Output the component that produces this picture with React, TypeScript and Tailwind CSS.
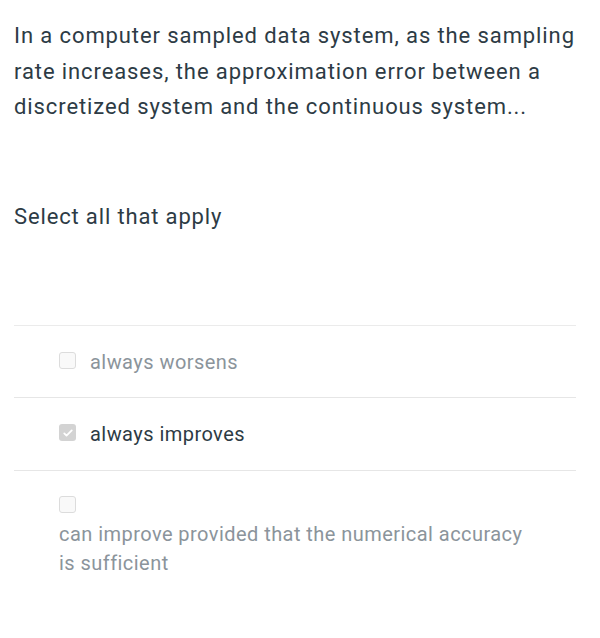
import React from 'react';

type Option = {
  id: string;
  label: string;
  checked: boolean;
  stacked?: boolean;
  rowClass: string;
};

const options: Option[] = [
  { id: 'opt-1', label: 'always worsens', checked: false, rowClass: 'h-[71px]' },
  { id: 'opt-2', label: 'always improves', checked: true, rowClass: 'h-[72px]' },
  {
    id: 'opt-3',
    label: 'can improve provided that the numerical accuracy is sufficient',
    checked: false,
    stacked: true,
    rowClass: '',
  },
];

function Box({ checked }: { checked: boolean }) {
  if (checked) {
    return (
      <span className="flex h-[17px] w-[17px] shrink-0 items-center justify-center rounded-[3px] bg-[#d3d3d3]">
        <svg viewBox="0 0 16 16" className="h-[12px] w-[12px]" fill="none" stroke="#ffffff" strokeWidth="2.4" strokeLinecap="round" strokeLinejoin="round">
          <path d="M3 8.5l3 3 7-7" />
        </svg>
      </span>
    );
  }
  return <span className="block h-[17px] w-[17px] shrink-0 rounded-[3px] border border-[#dcdcdc] bg-[#f9f9f9]" />;
}

export default function App() {
  return (
    <div className="min-h-[638px] bg-white pl-[14px] pr-[24px] pt-[18px] font-['Roboto',sans-serif] text-[#2d3b45]">
      <p className="text-[22px] leading-[35.5px] tracking-[0.9px]">
        In a computer sampled data system, as the sampling rate increases, the approximation error between a discretized system and the continuous system...
      </p>

      <p className="mt-[74px] text-[22px] leading-[35.5px] tracking-[0.85px]">Select all that apply</p>

      <div className="mt-[91px] border-t border-[#ebebeb]">
        {options.map((opt) => (
          <div key={opt.id} className="border-b border-[#e6e6e6] last:border-b-0">
            {opt.stacked ? (
              <div className="pl-[45px] pt-[25px] pb-[40px]">
                <Box checked={opt.checked} />
                <div className="mt-[7px] max-w-[475px] text-[20px] leading-[28.5px] tracking-[0.45px] text-[#8b949b]">{opt.label}</div>
              </div>
            ) : (
              <div className={`flex items-center gap-[14px] pl-[45px] ${opt.rowClass}`}>
                <span className="mb-[3px]">
                  <Box checked={opt.checked} />
                </span>
                <span className={opt.checked ? 'text-[20px] leading-[30px] tracking-[0.45px] text-[#2d3b45]' : 'text-[20px] leading-[30px] tracking-[0.45px] text-[#8b949b]'}>
                  {opt.label}
                </span>
              </div>
            )}
          </div>
        ))}
      </div>
    </div>
  );
}
